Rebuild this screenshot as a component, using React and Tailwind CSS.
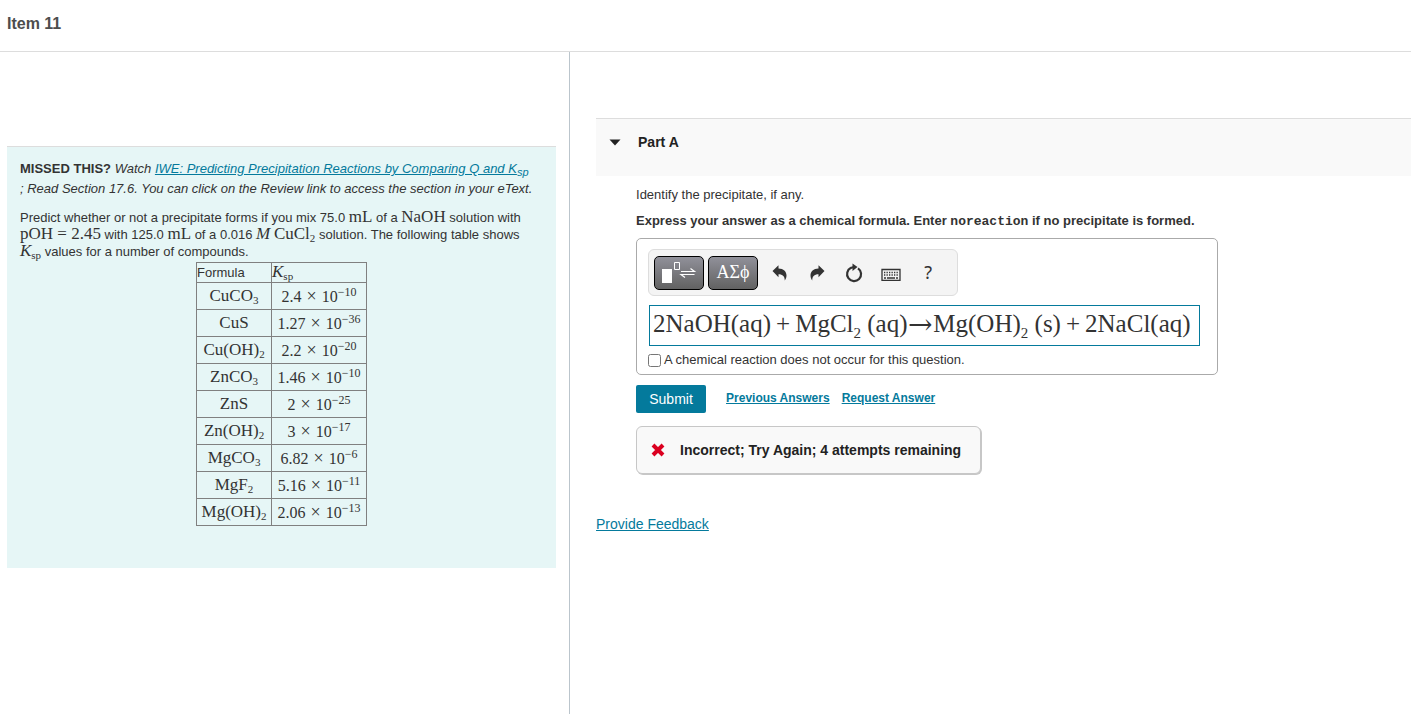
import React from "react";

const constants = [
  ["CuCO", "3", "2.4", "10"],
  ["CuS", "", "1.27", "36"],
  ["Cu(OH)", "2", "2.2", "20"],
  ["ZnCO", "3", "1.46", "10"],
  ["ZnS", "", "2", "25"],
  ["Zn(OH)", "2", "3", "17"],
  ["MgCO", "3", "6.82", "6"],
  ["MgF", "2", "5.16", "11"],
  ["Mg(OH)", "2", "2.06", "13"],
];

function Tex({ children }) {
  return <span className="font-['Liberation_Serif',serif] text-[17px] leading-4">{children}</span>;
}

function Sub({ children }) {
  return <sub className="text-[11px] leading-none">{children}</sub>;
}

function Ksp() {
  return (
    <Tex>
      <i>K</i>
      <Sub>sp</Sub>
    </Tex>
  );
}

function Intro() {
  return (
    <section className="mt-[94px] mr-[13px] ml-[7px] border-t border-[#dddddd] bg-[#e6f6f6] px-[13px] pt-3 pb-[42px] text-[13px] leading-4">
      <p className="leading-5">
        <b>MISSED THIS?</b>{" "}
        <i>
          Watch{" "}
          <a href="#video" className="text-[#047a9c] underline">
            IWE: Predicting Precipitation Reactions by Comparing Q and K<Sub>sp</Sub>
          </a>
          <br />
          ; Read Section 17.6. You can click on the Review link to access the section in your eText.
        </i>
      </p>
      <p className="mt-[10px]">
        Predict whether or not a precipitate forms if you mix 75.0 <Tex>mL</Tex> of a <Tex>NaOH</Tex> solution with{" "}
        <Tex>pOH = 2.45</Tex> with 125.0 <Tex>mL</Tex> of a 0.016 <Tex><i>M</i></Tex>{" "}
        <Tex>CuCl<Sub>2</Sub></Tex>{" "}
        solution. The following table shows <Ksp /> values for a number of compounds.
      </p>
      <table className="mx-auto mt-[2px] border-collapse">
        <thead>
          <tr className="h-5">
            <th className="w-[75px] border border-[#808080] p-0 text-left font-normal">Formula</th>
            <th className="w-[95px] border border-[#808080] p-0 text-left font-normal"><Ksp /></th>
          </tr>
        </thead>
        <tbody className="font-['Liberation_Serif',serif] text-center text-[16px]">
          {constants.map(([base, sub, value, power]) => (
            <tr key={base} className="h-[27px]">
              <td className="border border-[#808080] p-0"><Tex>{base}<Sub>{sub}</Sub></Tex></td>
              <td className="border border-[#808080] p-0 whitespace-nowrap">
                {value} <span className="mx-px text-[18px] leading-none">×</span> 10<sup className="text-[12px]">−{power}</sup>
              </td>
            </tr>
          ))}
        </tbody>
      </table>
    </section>
  );
}

const iconButton = "flex h-8 w-8 items-center justify-center";
const darkButton =
  "flex h-[34px] w-[50px] items-center justify-center rounded-[5px] border border-black bg-linear-to-b from-[#91919a] to-[#626262] text-white";

function Toolbar() {
  return (
    <div className="flex h-[47px] w-[310px] items-center rounded-md border border-[#dddddd] bg-[#f4f4f4] pl-[5px]">
      <button type="button" aria-label="Templates" className={darkButton}>
        <svg width="48" height="32" viewBox="0 0 48 32" fill="none">
          <path d="M7 12h10v14H7z" fill="#fff" />
          <path d="M19.500 5.500h5v7h-5z" stroke="#fff" />
          <path d="M26 14.500h13.500l-4-3M39.500 17.500H26l4 3" stroke="#fff" strokeWidth="1.200" />
        </svg>
      </button>
      <button type="button" aria-label="Greek letters" className={`${darkButton} ml-1`}>
        <span className="font-['Liberation_Serif',serif] text-[18px]">ΑΣϕ</span>
      </button>
      <div className="ml-[6px] flex gap-[5px]">
        <button type="button" aria-label="Undo" className={iconButton}>
          <svg width="16" height="16" viewBox="0 0 16 16" fill="#333">
            <path d="M.5 6 6.500.2V3.500c5 0 8 3 8 7 0 2-.7 3.800-1.800 5 .3-4-2-6.300-6.200-6.300v3z" />
          </svg>
        </button>
        <button type="button" aria-label="Redo" className={iconButton}>
          <svg width="16" height="16" viewBox="0 0 16 16" fill="#333">
            <path d="M15.500 6 9.500.2V3.500c-5 0-8 3-8 7 0 2 .7 3.800 1.800 5-.3-4 2-6.300 6.200-6.300v3z" />
          </svg>
        </button>
        <button type="button" aria-label="Reset" className={iconButton}>
          <svg width="18" height="20" viewBox="0 0 18 20">
            <path d="M6 4.800A7 7 0 1 0 13 5.300" fill="none" stroke="#333" strokeWidth="2.200" />
            <path d="M7.500 0.500 12.500 4 7.500 8z" fill="#333" />
            <path d="M5.500 5 9 4" stroke="#333" strokeWidth="2.200" />
          </svg>
        </button>
        <button type="button" aria-label="Keyboard shortcuts" className={iconButton}>
          <svg width="20" height="16" viewBox="0 0 20 16">
            <path d="M1 4.500h18v11H1z" fill="none" stroke="#333" strokeWidth="1.300" />
            <path d="M3 7.500h14M3 10h14" stroke="#333" strokeWidth="1.400" strokeDasharray="1.300 1.200" />
            <path d="M3 13h2M6 13h8M15 13h2" stroke="#333" strokeWidth="1.400" />
          </svg>
        </button>
        <button type="button" aria-label="Help" className={`${iconButton} font-['Noto_Sans',sans-serif] text-[18px] text-[#333]`}>
          ?
        </button>
      </div>
    </div>
  );
}

function EquationSub({ children }) {
  return <sub className="static align-[-6px] text-[15px] leading-none">{children}</sub>;
}

function AnswerPanel() {
  return (
    <div className="w-[582px] max-w-full rounded-[5px] border border-[#aaaaaa] pt-[10px] pr-[17px] pb-1 pl-[11px]">
      <Toolbar />
      <div
        role="textbox"
        aria-label="Chemical equation"
        tabIndex={0}
        className="mt-[9px] ml-px flex h-[41px] items-center border border-[#047a9c] pb-[2px] pl-[3px] font-['Liberation_Serif',serif] text-[25px] leading-8 whitespace-pre"
      >
        <span>
          2NaOH(aq)<span className="px-[5px]">+</span>MgCl<EquationSub>2</EquationSub> (aq)
          <span className="font-['DejaVu_Math_TeX_Gyre','Liberation_Serif',serif] text-[26px] leading-none">→</span>Mg(OH)<EquationSub>2</EquationSub> (s)
          <span className="px-[5px]">+</span>2NaCl(aq)
        </span>
      </div>
      <label className="mt-1 flex items-center gap-[3px] text-[13px] leading-5">
        <input type="checkbox" className="m-0 h-[13px] w-[13px]" />
        A chemical reaction does not occur for this question.
      </label>
    </div>
  );
}

export default function App() {
  return (
    <div className="flex min-h-screen flex-col bg-white font-['Liberation_Sans',Arial,sans-serif] text-[#333333]">
      <header className="flex h-[52px] items-center border-b border-[#dddddd] px-[7px] pb-1">
        <h1 className="text-[16px] font-bold text-[#4d4d4d]">Item 11</h1>
      </header>
      <div className="grid flex-1 grid-cols-[40.4%_1fr]">
        <div className="border-r border-[#bbc5cc]">
          <Intro />
        </div>
        <main className="pt-[66px] pl-[26px]">
          <div className="h-[58px] border-t border-[#dddddd] bg-[#f9f9f9] pt-[13px] pl-[13px]">
            <button type="button" className="flex items-center text-[14px] leading-5 font-bold text-[#222222]">
              <svg width="12" height="7" viewBox="0 0 12 7" className="mr-[17px]">
                <path d="M.5.500h11L6 6.500z" fill="#222" />
              </svg>
              Part A
            </button>
          </div>
          <div className="pl-10">
            <p className="mt-[9px] text-[13px] leading-5">Identify the precipitate, if any.</p>
            <p className="my-[6px] text-[13px] leading-5 font-bold">
              Express your answer as a chemical formula. Enter{" "}
              <span className="font-['Liberation_Mono',monospace]">noreaction</span> if no precipitate is formed.
            </p>
            <AnswerPanel />
            <div className="mt-[10px] flex items-start text-[12px] leading-[26px] font-bold text-[#047a9c]">
              <button type="button" className="mr-5 h-7 w-[70px] rounded-[2px] bg-[#047a9c] text-[14px] font-normal text-white">
                Submit
              </button>
              <a href="#previous" className="mr-3 underline">Previous Answers</a>
              <a href="#request" className="underline">Request Answer</a>
            </div>
            <div role="status" className="mt-[13px] flex h-12 w-[345px] items-center rounded-md border border-[#c7c7c7] bg-[#f9f9f9] pl-[14px] text-[14px] font-bold text-[#222222] shadow-[1px_1px_0_#c7c7c7]">
              <svg width="14" height="14" viewBox="0 0 14 14" className="mr-[15px]">
                <path d="m2 2 10 10M12 2 2 12" stroke="#db0020" strokeWidth="4" />
              </svg>
              Incorrect; Try Again; 4 attempts remaining
            </div>
          </div>
          <a href="#feedback" className="mt-10 inline-block text-[14px] leading-5 text-[#047a9c] underline">Provide Feedback</a>
        </main>
      </div>
    </div>
  );
}
